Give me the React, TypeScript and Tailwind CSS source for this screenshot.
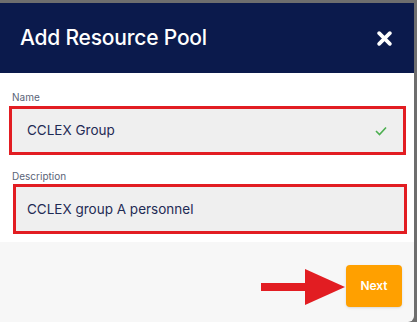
import React from "react";

export default function App() {
  return (
    <div className="w-[417px] h-[322px] bg-[#6e6e6e] pt-[3px] pr-[3px] overflow-hidden" style={{ fontFamily: "Inter, 'Liberation Sans', sans-serif" }}>
      <div className="w-[414px] h-[319px] bg-[#f7f7f7] rounded-br-[6px] overflow-hidden flex flex-col">
        <div className="h-[70px] bg-[#0b1a4c] flex items-center justify-between pl-[20px] pr-[22px]">
          <span className="text-white text-[21px] font-medium tracking-[-0.2px]">Add Resource Pool</span>
          <svg width="15" height="15" viewBox="0 0 14 14">
            <path d="M2 2 L12 12 M12 2 L2 12" stroke="white" strokeWidth="3.4" strokeLinecap="round" />
          </svg>
        </div>
        <div className="bg-white h-[169px] pt-[18px]">
          <div className="pl-[12px] text-[10px] text-[#5a6478] leading-[12px]">Name</div>
          <div className="ml-[9px] mr-[8px] mt-[3px] h-[49px] border-[3px] border-[#e21d22] bg-[#efefef] flex items-center justify-between pl-[15px] pr-[16px]">
            <span className="text-[13.5px] text-[#1f2b55]">CCLEX Group</span>
            <svg width="12" height="10" viewBox="0 0 12 10">
              <path d="M1 5 L4.5 8.5 L11 1.5" stroke="#4caf50" strokeWidth="1.6" fill="none" />
            </svg>
          </div>
          <div className="pl-[12px] mt-[15px] text-[10px] text-[#5a6478] leading-[12px]">Description</div>
          <div className="ml-[13px] mr-[7px] mt-[2px] h-[50px] border-[3px] border-[#e21d22] bg-[#efefef] flex items-center pl-[11px]">
            <span className="text-[13.5px] text-[#1f2b55]">CCLEX group A personnel</span>
          </div>
        </div>
        <div className="flex-1 flex items-start justify-end pr-[12px] pt-[23px]">
          <div className="flex items-center mr-[1px] mt-[3px]">
            <svg width="84" height="38" viewBox="0 0 84 38">
              <rect x="0" y="15" width="46" height="8" fill="#e21d22" />
              <polygon points="44,1 84,19 44,37" fill="#e21d22" />
            </svg>
          </div>
          <div className="w-[56px] h-[42px] bg-[#ffa000] rounded-[4px] flex items-center justify-center text-white text-[12px] font-semibold shadow-sm">Next</div>
        </div>
      </div>
    </div>
  );
}
